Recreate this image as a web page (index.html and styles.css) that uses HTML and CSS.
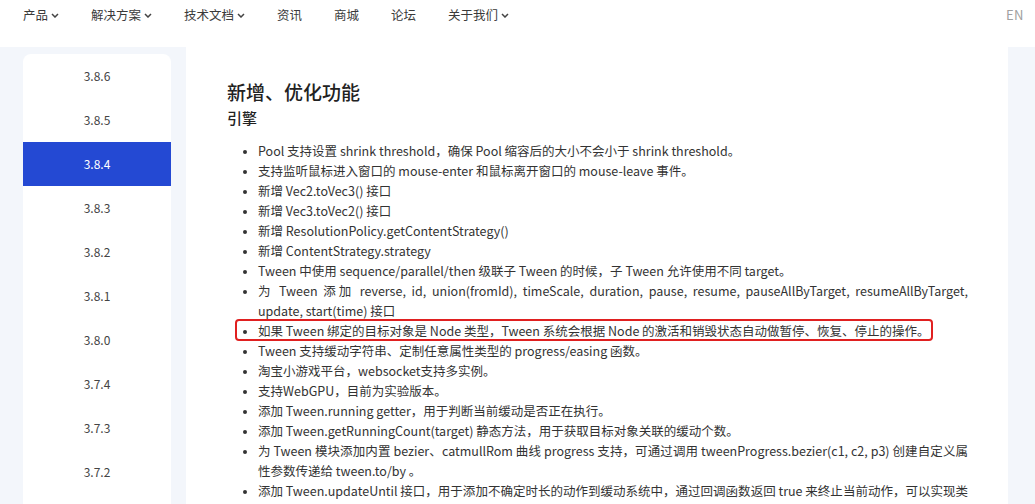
FILE: index.html
```html
<!DOCTYPE html>
<html lang="zh-CN">
<head>
<meta charset="utf-8">
<title>更新日志</title>
<link rel="stylesheet" href="styles.css">
</head>
<body>
<header class="topbar">
  <nav class="nav">
    <a class="nav-item">产品<svg class="chev" viewBox="0 0 8 5"><polyline points="1,1 4,4 7,1"/></svg></a>
    <a class="nav-item">解决方案<svg class="chev" viewBox="0 0 8 5"><polyline points="1,1 4,4 7,1"/></svg></a>
    <a class="nav-item">技术文档<svg class="chev" viewBox="0 0 8 5"><polyline points="1,1 4,4 7,1"/></svg></a>
    <a class="nav-item">资讯</a>
    <a class="nav-item">商城</a>
    <a class="nav-item">论坛</a>
    <a class="nav-item">关于我们<svg class="chev" viewBox="0 0 8 5"><polyline points="1,1 4,4 7,1"/></svg></a>
  </nav>
  <a class="lang">EN</a>
</header>
<main class="main">
  <aside class="sidebar">
    <a class="ver">3.8.6</a>
    <a class="ver">3.8.5</a>
    <a class="ver active">3.8.4</a>
    <a class="ver">3.8.3</a>
    <a class="ver">3.8.2</a>
    <a class="ver">3.8.1</a>
    <a class="ver">3.8.0</a>
    <a class="ver">3.7.4</a>
    <a class="ver">3.7.3</a>
    <a class="ver">3.7.2</a>
    <a class="ver">3.7.1</a>
  </aside>
  <article class="content">
    <h2 class="title">新增、优化功能</h2>
    <h3 class="subtitle">引擎</h3>
    <ul class="list">
      <li>Pool 支持设置 shrink threshold，确保 Pool 缩容后的大小不会小于 shrink threshold。</li>
      <li>支持监听鼠标进入窗口的 mouse-enter 和鼠标离开窗口的 mouse-leave 事件。</li>
      <li>新增 Vec2.toVec3() 接口</li>
      <li>新增 Vec3.toVec2() 接口</li>
      <li>新增 ResolutionPolicy.getContentStrategy()</li>
      <li>新增 ContentStrategy.strategy</li>
      <li>Tween 中使用 sequence/parallel/then 级联子 Tween 的时候，子 Tween 允许使用不同 target。</li>
      <li>为 Tween 添加 reverse, id, union(fromId), timeScale, duration, pause, resume, pauseAllByTarget, resumeAllByTarget, update, start(time) 接口</li>
      <li class="marked">如果 Tween 绑定的目标对象是 Node 类型，Tween 系统会根据 Node 的激活和销毁状态自动做暂停、恢复、停止的操作。<span class="mark-box"></span></li>
      <li>Tween 支持缓动字符串、定制任意属性类型的 progress/easing 函数。</li>
      <li>淘宝小游戏平台，websocket支持多实例。</li>
      <li>支持WebGPU，目前为实验版本。</li>
      <li>添加 Tween.running getter，用于判断当前缓动是否正在执行。</li>
      <li>添加 Tween.getRunningCount(target) 静态方法，用于获取目标对象关联的缓动个数。</li>
      <li>为 Tween 模块添加内置 bezier、catmullRom 曲线 progress 支持，可通过调用 tweenProgress.bezier(c1, c2, p3) 创建自定义属性参数传递给 tween.to/by 。</li>
      <li>添加 Tween.updateUntil 接口，用于添加不确定时长的动作到缓动系统中，通过回调函数返回 true 来终止当前动作，可以实现类似于 update 回调的效果。</li>
    </ul>
  </article>
</main>
</body>
</html>
```

FILE: styles.css
```css
* { box-sizing: border-box; }
html, body {
  margin: 0;
  padding: 0;
  height: 504px;
  overflow: hidden;
}
body {
  font-family: "Noto Sans CJK SC", "Noto Sans", sans-serif;
  color: #333;
  background: #f3f6fb;
}
a { color: inherit; text-decoration: none; }

.topbar {
  height: 47px;
  background: #fff;
  display: flex;
  justify-content: space-between;
  align-items: flex-start;
  padding: 5px 11px 0 23px;
}
.nav {
  display: flex;
  gap: 32px;
}
.nav-item {
  font-size: 12.5px;
  line-height: 20px;
  color: #3a3a3a;
  font-weight: 400;
  display: flex;
  align-items: center;
  gap: 3px;
}
.chev {
  width: 8px;
  height: 5px;
  fill: none;
  stroke: #444;
  stroke-width: 1.5;
  margin-top: 1px;
}
.lang {
  font-size: 13px;
  line-height: 20px;
  color: #a0a0a0;
  letter-spacing: 0.5px;
}

.main {
  display: flex;
  align-items: flex-start;
  padding-left: 23px;
  padding-right: 27px;
  gap: 15px;
}
.sidebar {
  width: 148px;
  flex: none;
  margin-top: 7px;
  background: #fff;
  border-radius: 8px 8px 0 0;
  display: flex;
  flex-direction: column;
}
.ver {
  height: 44px;
  display: flex;
  align-items: center;
  justify-content: center;
  font-size: 12px;
  color: #444;
  padding-bottom: 1px;
}
.ver.active {
  background: #2449d3;
  color: #fff;
}

.content {
  flex: 1;
  background: #fff;
  min-height: 460px;
  padding: 32px 40px 0 41px;
}
.title {
  margin: 0;
  font-size: 19px;
  line-height: 26px;
  font-weight: 500;
  color: #222;
}
.subtitle {
  margin: 2px 0 0;
  font-size: 15px;
  line-height: 22px;
  font-weight: 500;
  color: #222;
}
.list {
  margin: 12px 0 0;
  padding-left: 31px;
  font-size: 12.5px;
  line-height: 20px;
  color: #333;
  text-align: justify;
}
.list li::marker {
  font-size: 10px;
}
.marked {
  position: relative;
}
.mark-box {
  position: absolute;
  left: -23px;
  right: 35px;
  top: -2px;
  bottom: 0;
  border: 2px solid #e02020;
  border-radius: 4px;
}
```
